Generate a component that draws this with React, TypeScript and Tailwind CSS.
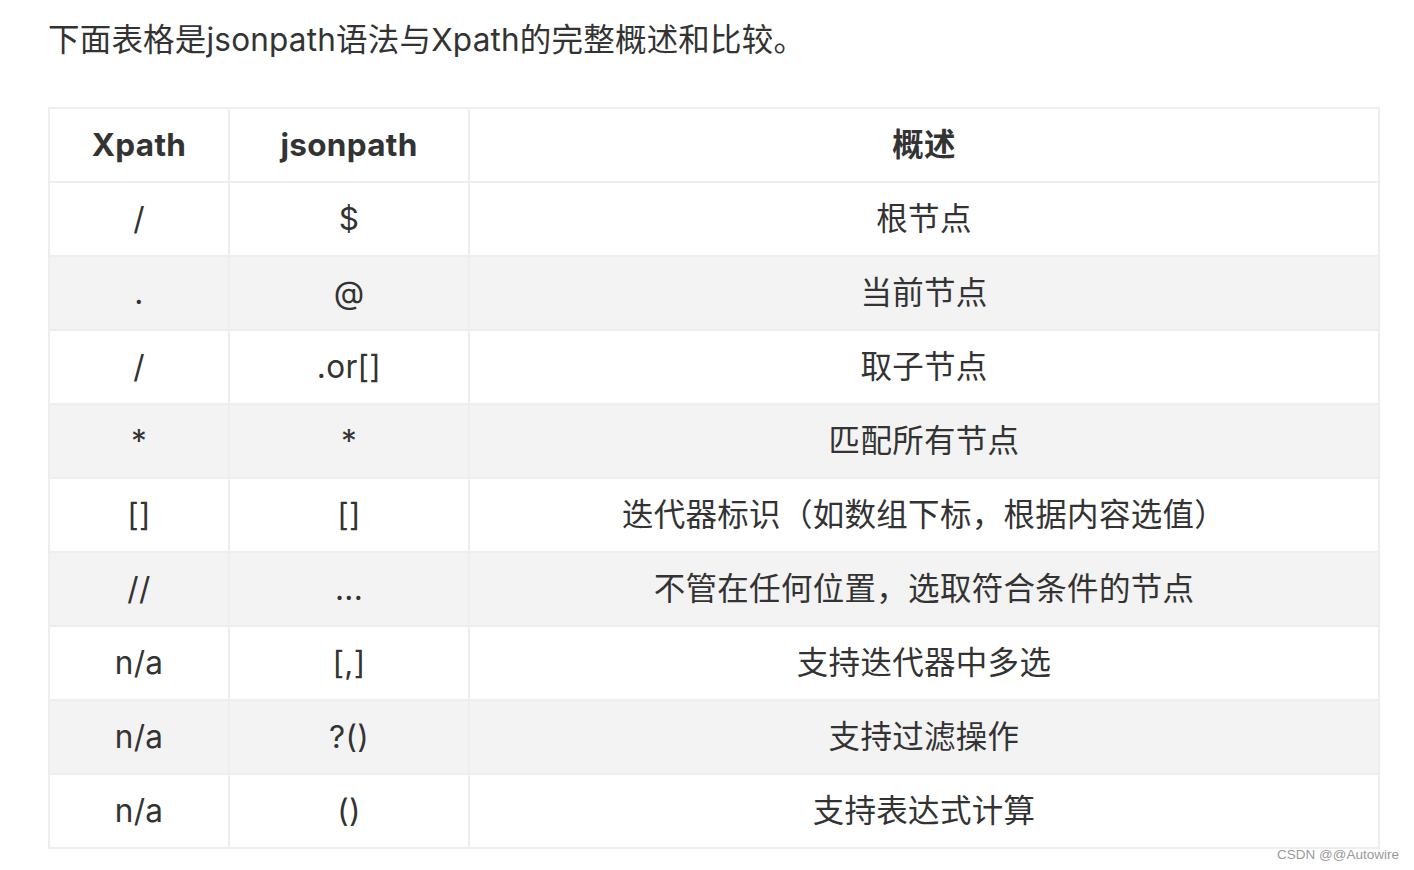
const rows: [string, string, string][] = [
  ["/", "$", "根节点"],
  [".", "@", "当前节点"],
  ["/", ".or[]", "取子节点"],
  ["*", "*", "匹配所有节点"],
  ["[]", "[]", "迭代器标识（如数组下标，根据内容选值）"],
  ["//", "...", "不管在任何位置，选取符合条件的节点"],
  ["n/a", "[,]", "支持迭代器中多选"],
  ["n/a", "?()", "支持过滤操作"],
  ["n/a", "()", "支持表达式计算"],
];

export default function App() {
  return (
    <div
      className="relative min-h-[870px] w-[1414px] bg-white text-[#333333]"
      style={{ fontFamily: 'Inter, "Noto Sans CJK SC", sans-serif' }}
    >
      <div className="pl-[48px] pt-[19px]">
        <p className="text-[31.5px] leading-[42px] tracking-[0.2px]">
          下面表格是jsonpath语法与Xpath的完整概述和比较。
        </p>
        <table className="mt-[46px] border-collapse text-[31.5px] tracking-[0.3px]">
          <thead>
            <tr className="h-[74px]">
              <th className="w-[180px] border-2 border-[#eeeeee] font-bold">Xpath</th>
              <th className="w-[240px] border-2 border-[#eeeeee] font-bold">jsonpath</th>
              <th className="w-[910px] border-2 border-[#eeeeee] font-bold">概述</th>
            </tr>
          </thead>
          <tbody>
            {rows.map((r, i) => (
              <tr key={i} className={i % 2 === 1 ? "h-[74px] bg-[#f3f3f3]" : "h-[74px] bg-white"}>
                <td className="border-2 border-[#eeeeee] text-center">{r[0]}</td>
                <td className="border-2 border-[#eeeeee] text-center">{r[1]}</td>
                <td className="border-2 border-[#eeeeee] text-center">{r[2]}</td>
              </tr>
            ))}
          </tbody>
        </table>
      </div>
      <span
        className="absolute left-[1277px] top-[846px] text-[13.5px] leading-[18px] text-[#9a9a9a]"
        style={{ fontFamily: '"Liberation Sans", sans-serif' }}
      >
        CSDN @@Autowire
      </span>
    </div>
  );
}
